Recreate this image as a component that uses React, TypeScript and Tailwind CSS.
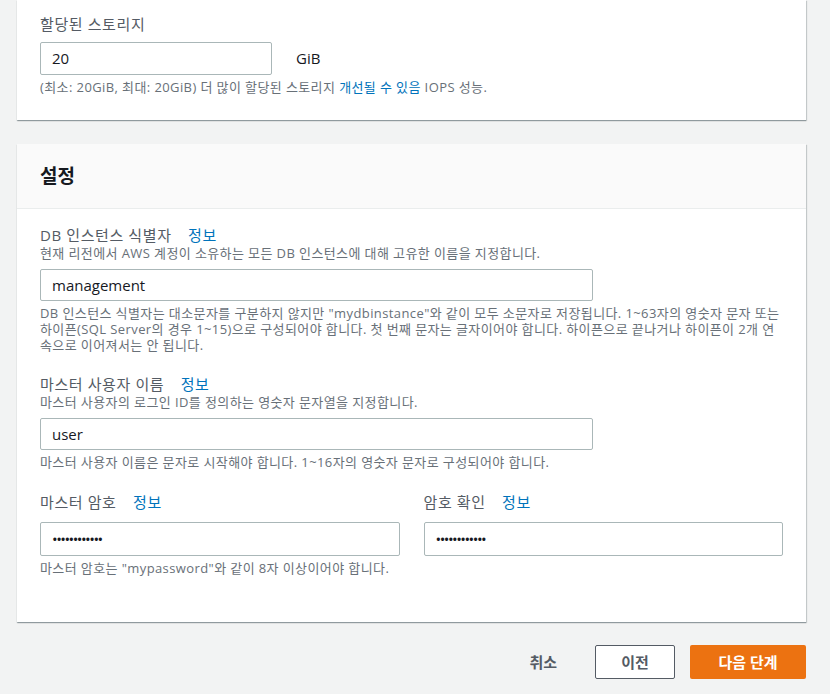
export default function App() {
  const f = { fontFamily: '"Open Sans","Noto Sans CJK KR",sans-serif' };
  const input = "h-[32px] border border-[#aab7b8] rounded-[2px] bg-white px-[11px] flex items-center text-[15px] text-[#16191f]";
  const help = "text-[13px] tracking-[0.4px] text-[#687078] leading-[16px]";
  const label = "text-[15px] tracking-[0.6px] leading-[20px] text-[#545b64]";
  const link = "text-[#0073bb]";
  return (
    <div style={f} className="w-[830px] h-[694px] bg-[#f2f3f3] overflow-hidden text-[#16191f]">
      <div className="mx-[17px] w-[789px] bg-white shadow-[0_1px_1px_rgba(0,28,36,0.3),1px_1px_1px_rgba(0,28,36,0.15)] h-[120px] px-[23px] pt-[14px]">
        <div className={label}>할당된 스토리지</div>
        <div className="flex items-center mt-[8px]">
          <div className={input + " w-[232px] h-[33px]"}>20</div>
          <span className="ml-[24px] text-[15px]">GiB</span>
        </div>
        <div className={help + " mt-[4px]"}>(최소: 20GiB, 최대: 20GiB) 더 많이 할당된 스토리지 <span className={link}>개선될 수 있음</span> IOPS 성능.</div>
      </div>
      <div className="mx-[17px] mt-[24px] w-[789px] bg-white shadow-[0_1px_1px_rgba(0,28,36,0.3),1px_1px_1px_rgba(0,28,36,0.15)] h-[478px]">
        <div className="h-[65px] bg-[#fafafa] border-b border-[#eaeded] px-[23px] flex items-center text-[19px] font-bold">설정</div>
        <div className="px-[23px] pt-[16px]">
          <div className={label}>DB 인스턴스 식별자 <span className={link + " ml-[12px]"}>정보</span></div>
          <div className={help}>현재 리전에서 AWS 계정이 소유하는 모든 DB 인스턴스에 대해 고유한 이름을 지정합니다.</div>
          <div className={input + " w-[553px] mt-[8px]"}>management</div>
          <div className={help + " mt-[4px] w-[745px]"}>DB 인스턴스 식별자는 대소문자를 구분하지 않지만 "mydbinstance"와 같이 모두 소문자로 저장됩니다. 1~63자의 영숫자 문자 또는 하이픈(SQL Server의 경우 1~15)으로 구성되어야 합니다. 첫 번째 문자는 글자이어야 합니다. 하이픈으로 끝나거나 하이픈이 2개 연속으로 이어져서는 안 됩니다.</div>
          <div className={label + " mt-[21px]"}>마스터 사용자 이름 <span className={link + " ml-[12px]"}>정보</span></div>
          <div className={help}>마스터 사용자의 로그인 ID를 정의하는 영숫자 문자열을 지정합니다.</div>
          <div className={input + " w-[553px] mt-[8px]"}>user</div>
          <div className={help + " mt-[4px]"}>마스터 사용자 이름은 문자로 시작해야 합니다. 1~16자의 영숫자 문자로 구성되어야 합니다.</div>
          <div className="flex gap-[24px] mt-[22px]">
            <div className="w-[360px]">
              <div className={label}>마스터 암호 <span className={link + " ml-[12px]"}>정보</span></div>
              <div className={input + " mt-[10px] h-[34px] text-[12px] tracking-[-1.5px]"}>••••••••••••</div>
              <div className={help + " mt-[4px] w-[350px]"}>마스터 암호는 "mypassword"와 같이 8자 이상이어야 합니다.</div>
            </div>
            <div className="w-[360px]">
              <div className={label}>암호 확인 <span className={link + " ml-[12px]"}>정보</span></div>
              <div className={input + " mt-[10px] h-[34px] text-[12px] tracking-[-1.5px]"}>••••••••••••</div>
            </div>
          </div>
        </div>
      </div>
      <div className="flex items-center justify-end mr-[24px] mt-[23px]">
        <span className="text-[15px] font-semibold text-[#545b64] mr-[38px]">취소</span>
        <div className="w-[80px] h-[34px] border border-[#545b64] rounded-[2px] bg-white flex items-center justify-center text-[15px] font-semibold text-[#545b64] mr-[15px]">이전</div>
        <div className="w-[116px] h-[34px] rounded-[2px] bg-[#ec7211] flex items-center justify-center text-[15px] font-semibold text-white">다음 단계</div>
      </div>
    </div>
  );
}
